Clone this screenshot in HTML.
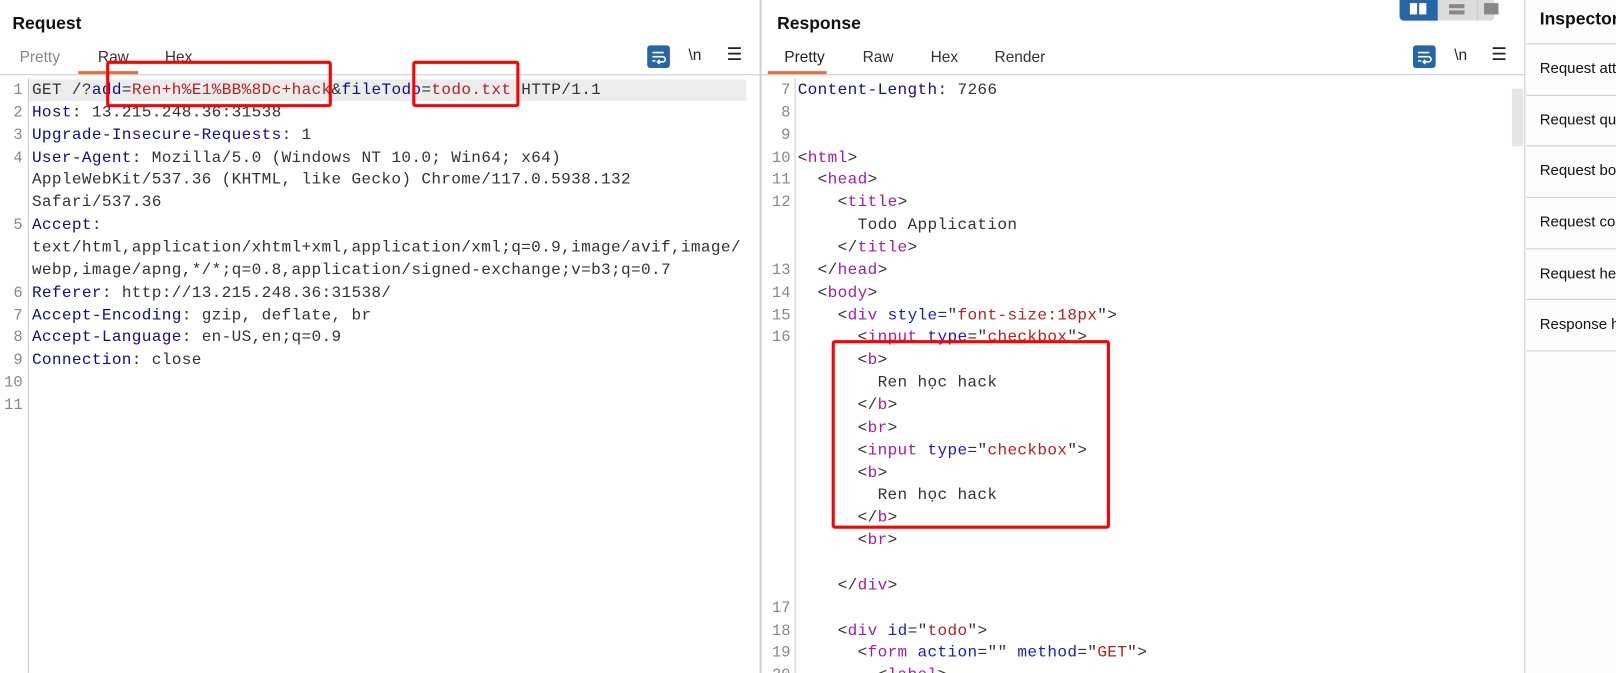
<!DOCTYPE html>
<html><head><meta charset="utf-8">
<style>
*{margin:0;padding:0;box-sizing:border-box}
html,body{width:1616px;height:673px;overflow:hidden;background:#fff}
#w{position:absolute;left:0;top:0;width:1568px;height:653px;transform:scale(1.03061);transform-origin:0 0;font-family:"Liberation Sans",sans-serif;overflow:hidden}
.a{position:absolute}
.h{font-weight:bold;font-size:17px;color:#111;white-space:nowrap}
.tab{font-size:15px;color:#333;position:absolute;top:47px}
.code{font-family:"Liberation Mono",monospace;font-size:15.6px;letter-spacing:.33px;white-space:pre;line-height:21.86px;position:absolute;color:#333}
.ln{font-family:"Liberation Mono",monospace;font-size:15px;line-height:21.86px;color:#888;position:absolute;text-align:right;white-space:pre}
.k{color:#101080}.v{color:#b22222}.t{color:#a020a0}.at{color:#1a1acc}
.box{position:absolute;border:3px solid #f00;border-radius:3px}
.ins{position:absolute;left:1494px;font-size:14.5px;color:#111;white-space:nowrap}
.sep{position:absolute;left:1481px;width:90px;height:1px;background:#ccc}
.wrap{position:absolute;width:22px;height:22px;background:#2565a8;border-radius:3px}
</style></head><body><div id="w">
<div class="a" style="left:737px;top:0;width:2px;height:653px;background:#d0d0d0"></div>
<div class="a" style="left:1480px;top:0;width:88px;height:653px;background:#fcfcfc"></div>
<div class="a" style="left:1479px;top:0;width:1px;height:653px;background:#ccc"></div>

<div class="a h" style="left:12px;top:13px">Request</div>
<div class="tab" style="left:19px;color:#888">Pretty</div>
<div class="tab" style="left:95px">Raw</div>
<div class="tab" style="left:160px">Hex</div>
<div class="a" style="left:76px;top:69px;width:58px;height:3px;background:#f26a3a"></div>
<div class="a" style="left:0;top:72px;width:737px;height:1px;background:#ccc"></div>
<div class="wrap" style="left:628px;top:44px"><svg width="22" height="22"><path d="M5 7h11M5 11h10a2.5 2.5 0 0 1 0 5h-5M12 14l-2 2 2 2M5 15h3" stroke="#fff" stroke-width="1.6" fill="none"/></svg></div>
<div class="a" style="left:668px;top:45px;font-size:15px;color:#222">\n</div>
<div class="a" style="left:705px;top:43px;font-size:17px;color:#222">☰</div>

<div class="a" style="left:27px;top:77px;width:697px;height:21px;background:#ececec"></div>
<div class="a" style="left:27px;top:76px;width:1px;height:577px;background:#ccc"></div>
<div class="ln" style="left:0;top:77px;width:22px">1
2
3
4


5


6
7
8
9
10
11</div>
<div class="code" style="left:31px;top:77px">GET /?<span class="k">add</span>=<span class="v">Ren+h%E1%BB%8Dc+hack</span>&amp;<span class="k">fileTodo</span>=<span class="v">todo.txt</span> HTTP/1.1
<span class="k">Host</span>: 13.215.248.36:31538
<span class="k">Upgrade-Insecure-Requests</span>: 1
<span class="k">User-Agent</span>: Mozilla/5.0 (Windows NT 10.0; Win64; x64)
AppleWebKit/537.36 (KHTML, like Gecko) Chrome/117.0.5938.132
Safari/537.36
<span class="k">Accept</span>:
text/html,application/xhtml+xml,application/xml;q=0.9,image/avif,image/
webp,image/apng,*/*;q=0.8,application/signed-exchange;v=b3;q=0.7
<span class="k">Referer</span>: http://13.215.248.36:31538/
<span class="k">Accept-Encoding</span>: gzip, deflate, br
<span class="k">Accept-Language</span>: en-US,en;q=0.9
<span class="k">Connection</span>: close</div>
<div class="box" style="left:103px;top:59px;width:219px;height:45px"></div>
<div class="box" style="left:400px;top:59px;width:104px;height:45px"></div>

<div class="a h" style="left:754px;top:13px">Response</div>
<div class="tab" style="left:761px;color:#222">Pretty</div>
<div class="tab" style="left:837px">Raw</div>
<div class="tab" style="left:903px">Hex</div>
<div class="tab" style="left:965px">Render</div>
<div class="a" style="left:745px;top:69px;width:57px;height:3px;background:#f26a3a"></div>
<div class="a" style="left:739px;top:72px;width:740px;height:1px;background:#ccc"></div>
<div class="wrap" style="left:1371px;top:44px"><svg width="22" height="22"><path d="M5 7h11M5 11h10a2.5 2.5 0 0 1 0 5h-5M12 14l-2 2 2 2M5 15h3" stroke="#fff" stroke-width="1.6" fill="none"/></svg></div>
<div class="a" style="left:1411px;top:45px;font-size:15px;color:#222">\n</div>
<div class="a" style="left:1447px;top:43px;font-size:17px;color:#222">☰</div>
<div class="a" style="left:1358px;top:0;width:92px;height:20px;background:#dcdcdc;border-radius:0 0 4px 4px"></div>
<div class="a" style="left:1358px;top:0;width:37px;height:20px;background:#2565a8;border-radius:0 0 0 4px"></div>
<div class="a" style="left:1368px;top:3px;width:7px;height:11px;background:#fff"></div>
<div class="a" style="left:1377px;top:3px;width:7px;height:11px;background:#fff"></div>
<div class="a" style="left:1406px;top:4px;width:15px;height:4px;background:#888"></div>
<div class="a" style="left:1406px;top:10px;width:15px;height:4px;background:#888"></div>
<div class="a" style="left:1433px;top:0;width:1px;height:20px;background:#ccc"></div>
<div class="a" style="left:1440px;top:3px;width:14px;height:11px;background:#888"></div>

<div class="a" style="left:771px;top:76px;width:1px;height:577px;background:#ccc"></div>
<div class="a" style="left:1467px;top:86px;width:11px;height:56px;background:#e6e6e6"></div>
<div class="ln" style="left:740px;top:77px;width:27px">7
8
9
10
11
12


13
14
15
16











17
18
19
20</div>
<div class="code" style="left:774px;top:77px"><span class="k">Content-Length</span>: 7266


&lt;<span class="t">html</span>&gt;
  &lt;<span class="t">head</span>&gt;
    &lt;<span class="t">title</span>&gt;
      Todo Application
    &lt;/<span class="t">title</span>&gt;
  &lt;/<span class="t">head</span>&gt;
  &lt;<span class="t">body</span>&gt;
    &lt;<span class="t">div</span> <span class="at">style</span>="<span class="v">font-size:18px</span>"&gt;
      &lt;<span class="t">input</span> <span class="at">type</span>="<span class="v">checkbox</span>"&gt;
      &lt;<span class="t">b</span>&gt;
        Ren học hack
      &lt;/<span class="t">b</span>&gt;
      &lt;<span class="t">br</span>&gt;
      &lt;<span class="t">input</span> <span class="at">type</span>="<span class="v">checkbox</span>"&gt;
      &lt;<span class="t">b</span>&gt;
        Ren học hack
      &lt;/<span class="t">b</span>&gt;
      &lt;<span class="t">br</span>&gt;

    &lt;/<span class="t">div</span>&gt;

    &lt;<span class="t">div</span> <span class="at">id</span>="<span class="v">todo</span>"&gt;
      &lt;<span class="t">form</span> <span class="at">action</span>="" <span class="at">method</span>="<span class="v">GET</span>"&gt;
        &lt;<span class="t">label</span>&gt;</div>
<div class="box" style="left:807px;top:330px;width:270px;height:183px"></div>

<div class="a h" style="left:1494px;top:9px">Inspector</div>
<div class="sep" style="top:42px"></div>
<div class="ins" style="top:59px">Request attributes</div>
<div class="sep" style="top:92px"></div>
<div class="ins" style="top:109px">Request query parameters</div>
<div class="sep" style="top:141px"></div>
<div class="ins" style="top:158px">Request body parameters</div>
<div class="sep" style="top:191px"></div>
<div class="ins" style="top:208px">Request cookies</div>
<div class="sep" style="top:241px"></div>
<div class="ins" style="top:258px">Request headers</div>
<div class="sep" style="top:290px"></div>
<div class="ins" style="top:307px">Response headers</div>
<div class="sep" style="top:340px"></div>
</div></body></html>
